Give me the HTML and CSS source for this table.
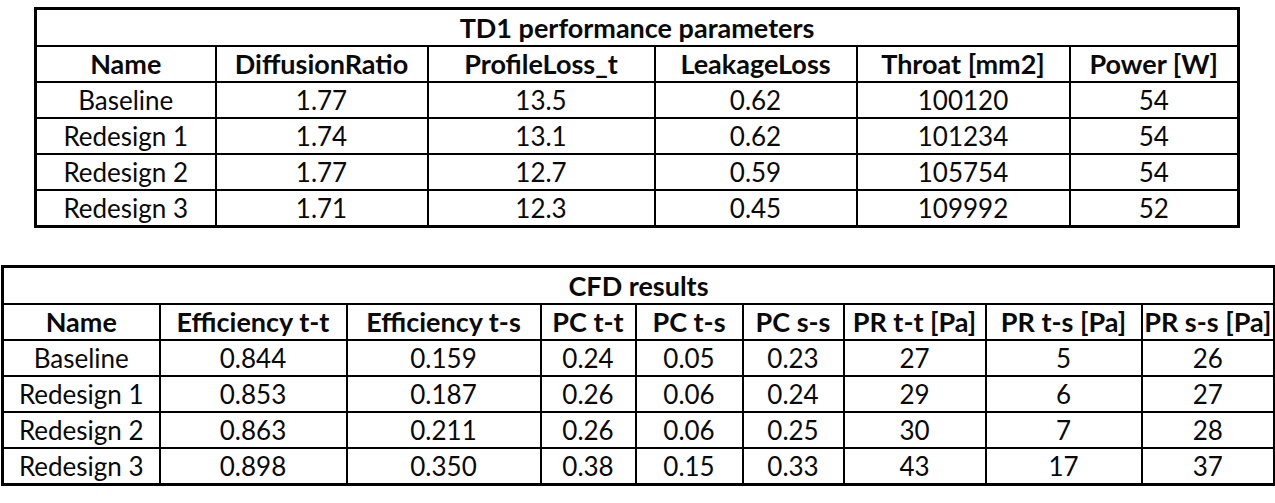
FILE: index.html
```html
<!DOCTYPE html>
<html>
<head>
<meta charset="utf-8">
<link rel="stylesheet" href="styles.css">
</head>
<body>
<div class="page">
  <table class="grid grid-td1">
    <colgroup>
      <col class="c180"><col class="c212"><col class="c227"><col class="c202"><col class="c213"><col class="c169">
    </colgroup>
    <tr class="title"><th colspan="6">TD1 performance parameters</th></tr>
    <tr class="head"><th>Name</th><th>DiffusionRatio</th><th>ProfileLoss_t</th><th>LeakageLoss</th><th>Throat [mm2]</th><th>Power [W]</th></tr>
    <tr><td>Baseline</td><td>1.77</td><td>13.5</td><td>0.62</td><td>100120</td><td>54</td></tr>
    <tr><td>Redesign 1</td><td>1.74</td><td>13.1</td><td>0.62</td><td>101234</td><td>54</td></tr>
    <tr><td>Redesign 2</td><td>1.77</td><td>12.7</td><td>0.59</td><td>105754</td><td>54</td></tr>
    <tr><td>Redesign 3</td><td>1.71</td><td>12.3</td><td>0.45</td><td>109992</td><td>52</td></tr>
  </table>

  <table class="grid grid-cfd">
    <colgroup>
      <col class="c157"><col class="c187"><col class="c194"><col class="c95"><col class="c107"><col class="c101"><col class="c142"><col class="c156"><col class="c133">
    </colgroup>
    <tr class="title"><th colspan="9">CFD results</th></tr>
    <tr class="head"><th>Name</th><th>Efficiency t-t</th><th>Efficiency t-s</th><th>PC t-t</th><th>PC t-s</th><th>PC s-s</th><th>PR t-t [Pa]</th><th>PR t-s [Pa]</th><th>PR s-s [Pa]</th></tr>
    <tr><td>Baseline</td><td>0.844</td><td>0.159</td><td>0.24</td><td>0.05</td><td>0.23</td><td>27</td><td>5</td><td>26</td></tr>
    <tr><td>Redesign 1</td><td>0.853</td><td>0.187</td><td>0.26</td><td>0.06</td><td>0.24</td><td>29</td><td>6</td><td>27</td></tr>
    <tr><td>Redesign 2</td><td>0.863</td><td>0.211</td><td>0.26</td><td>0.06</td><td>0.25</td><td>30</td><td>7</td><td>28</td></tr>
    <tr><td>Redesign 3</td><td>0.898</td><td>0.350</td><td>0.38</td><td>0.15</td><td>0.33</td><td>43</td><td>17</td><td>37</td></tr>
  </table>
</div>
</body>
</html>
```

FILE: styles.css
```css
html, body {
  margin: 0;
  padding: 0;
  background: #ffffff;
}

.page {
  display: flex;
  flex-direction: column;
  align-items: flex-start;
  padding-top: 7px;
  font-family: Lato, "Open Sans", sans-serif;
  color: #0a0a0a;
}

.grid {
  border-collapse: collapse;
  table-layout: fixed;
  border: 3px solid #000;
}

.grid-td1 {
  width: 1204px;
  margin-left: 34px;
}

.grid-cfd {
  width: 1273px;
  margin-left: 1px;
  margin-top: 37px;
}

.grid th,
.grid td {
  border: 2px solid #000;
  height: 34px;
  padding: 0;
  text-align: center;
  vertical-align: middle;
  line-height: 30px;
  white-space: nowrap;
  overflow: hidden;
}

.grid .title th {
  height: 35px;
}

.grid th {
  font-weight: 700;
  font-size: 27px;
}

.grid td {
  font-weight: 400;
  font-size: 26px;
}

.c180 { width: 180px; }
.c212 { width: 212px; }
.c227 { width: 227px; }
.c202 { width: 202px; }
.c213 { width: 213px; }
.c169 { width: 169px; }

.c157 { width: 157px; }
.c187 { width: 187px; }
.c194 { width: 194px; }
.c95 { width: 95px; }
.c107 { width: 107px; }
.c101 { width: 101px; }
.c142 { width: 142px; }
.c156 { width: 156px; }
.c133 { width: 133px; }
```
